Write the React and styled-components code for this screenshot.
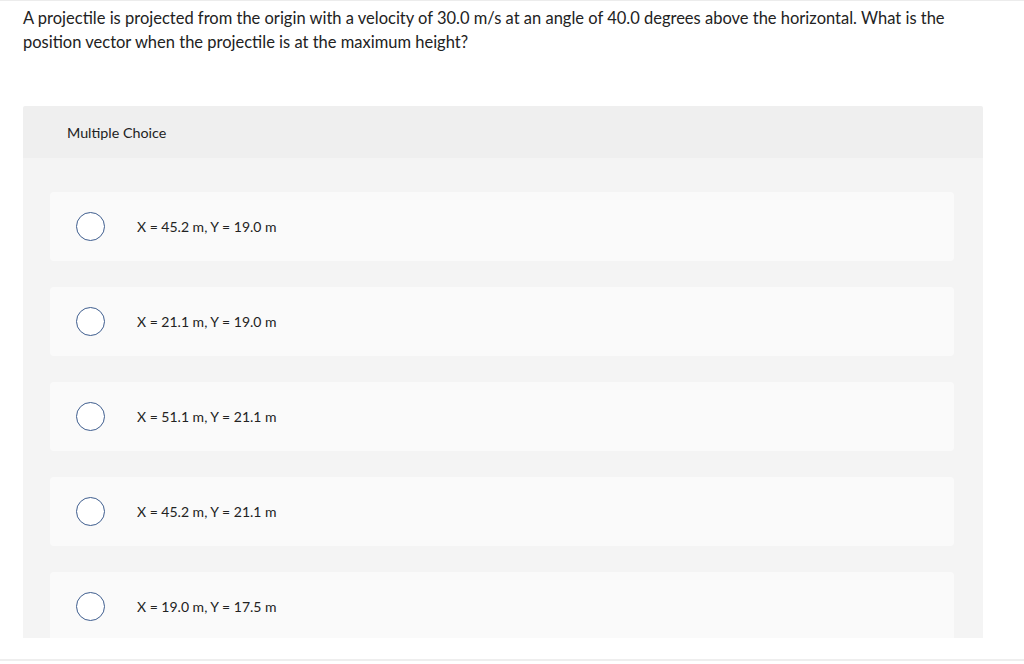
import styled, { createGlobalStyle } from 'styled-components'

const GlobalStyle = createGlobalStyle`
    html, body {
        margin: 0;
        padding: 0;
        background: #fff;
    }
    body {
        font-family: Lato, "Open Sans", "Liberation Sans", sans-serif;
        color: #222;
    }
`

const choices = [
    'X = 45.2 m, Y = 19.0 m',
    'X = 21.1 m, Y = 19.0 m',
    'X = 51.1 m, Y = 21.1 m',
    'X = 45.2 m, Y = 21.1 m',
    'X = 19.0 m, Y = 17.5 m',
]

const App = () => {
    return (
        <Page>
            <GlobalStyle />

            <Question>
                A projectile is projected from the origin with a velocity of 30.0 m/s at an angle of 40.0 degrees above the horizontal. What is the position vector when the projectile is at the maximum height?
            </Question>

            <Panel>
                <PanelHead>Multiple Choice</PanelHead>

                <PanelBody>
                    {choices.map((choice) => (
                        <Choice key={choice}>
                            <Radio />
                            <ChoiceText>{choice}</ChoiceText>
                        </Choice>
                    ))}
                </PanelBody>
            </Panel>

            <Footer />
        </Page>
    )
}

export default App

const Page = styled.div`
    width: 1024px;
    height: 664px;
    box-sizing: border-box;
    border-top: 1px solid #ececec;
    overflow: hidden;
    display: flex;
    flex-direction: column;
`

const Question = styled.p`
    margin: 0;
    padding: 5px 55px 0 23px;
    font-size: 16.5px;
    line-height: 24px;
    color: #222;
`

const Panel = styled.div`
    margin: 52px 0 0 23px;
    width: 960px;
    border-radius: 2px 2px 0 0;
    overflow: hidden;
`

const PanelHead = styled.div`
    height: 52px;
    display: flex;
    align-items: center;
    padding-left: 44px;
    background: #efefef;
    font-size: 14.3px;
    color: #222;
`

const PanelBody = styled.div`
    height: 480px;
    box-sizing: border-box;
    overflow: hidden;
    background: #f4f4f4;
    padding: 34px 29px 0 27px;
    display: flex;
    flex-direction: column;
    gap: 26px;
`

const Choice = styled.div`
    flex-shrink: 0;
    height: 69px;
    display: flex;
    align-items: center;
    padding-left: 26px;
    background: #fafafa;
    border-radius: 4px;
`

const Radio = styled.span`
    width: 29px;
    height: 29px;
    box-sizing: border-box;
    border: 1.5px solid #3e5d8e;
    border-radius: 50%;
    background: #fff;
    flex-shrink: 0;
`

const ChoiceText = styled.span`
    margin-left: 32px;
    font-size: 14px;
    color: #222;
`

const Footer = styled.div`
    margin-top: 21px;
    border-top: 2px solid #eeeeee;
`
